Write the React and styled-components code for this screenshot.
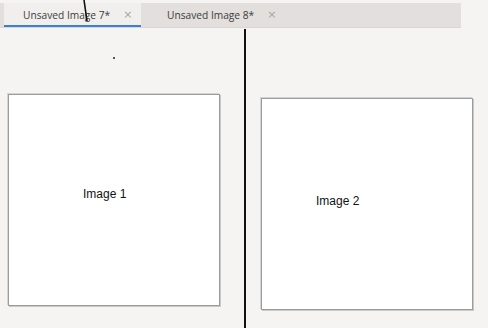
import React from "react";
import styled, { createGlobalStyle } from "styled-components";

const Global = createGlobalStyle`
  html, body { margin: 0; padding: 0; background: #f5f4f2; }
  body { width: 488px; height: 328px; overflow: hidden; }
`;

const tabs = [
  { title: "Unsaved Image 7*", active: true, pad: 19, width: 137 },
  { title: "Unsaved Image 8*", active: false, pad: 26, width: 150 },
];

function App() {
  return (
    <>
      <Global />
      <Page>
        <TabBar>
          {tabs.map((t) => (
            <Tab key={t.title} $active={t.active} $pad={t.pad} $w={t.width}>
              <span>{t.title}</span>
              <Close>×</Close>
            </Tab>
          ))}
        </TabBar>
        <Body>
          <Pane $w={244}>
            <Canvas $mt={65} $ml={8}>
              <Label $top={92} $left={74}>Image 1</Label>
            </Canvas>
          </Pane>
          <Divider />
          <Pane>
            <Canvas $mt={69} $ml={15}>
              <Label $top={95} $left={54}>Image 2</Label>
            </Canvas>
          </Pane>
        </Body>
        <Dot />
        <Stroke width="10" height="24" viewBox="0 0 10 24">
          <path d="M1 0 L4 21" stroke="#111" strokeWidth="1.6" fill="none" />
        </Stroke>
      </Page>
    </>
  );
}

const Page = styled.div`
  position: relative;
  width: 488px;
  height: 328px;
  padding-top: 3px;
  box-sizing: border-box;
  display: flex;
  flex-direction: column;
`;

const TabBar = styled.div`
  width: 457px;
  height: 24px;
  background: #e2dfdc;
  border-bottom: 1px solid #d9d6d3;
  display: flex;
  padding-left: 4px;
  box-sizing: content-box;
`;

const Tab = styled.div`
  width: ${(p) => p.$w}px;
  height: 24px;
  box-sizing: border-box;
  display: flex;
  align-items: center;
  gap: 13px;
  padding: 1px 0 0 ${(p) => p.$pad}px;
  white-space: nowrap;
  background: ${(p) => (p.$active ? "#f0efed" : "transparent")};
  border-bottom: 2px solid ${(p) => (p.$active ? "#3a80db" : "transparent")};
  font-family: "Open Sans", "Noto Sans", sans-serif;
  font-size: 10.2px;
  color: #3c3c3c;
`;

const Close = styled.span`
  font-family: "DejaVu Sans", sans-serif;
  font-size: 11px;
  color: #a6a6a6;
`;

const Body = styled.div`
  flex: 1;
  display: flex;
  margin-top: 1px;
`;

const Pane = styled.div`
  ${(p) => (p.$w ? `width: ${p.$w}px;` : "flex: 1;")}
  display: flex;
  align-items: flex-start;
`;

const Divider = styled.div`
  width: 2px;
  background: #111;
`;

const Canvas = styled.div`
  margin-top: ${(p) => p.$mt}px;
  margin-left: ${(p) => p.$ml}px;
  width: 212px;
  height: 212px;
  background: #fff;
  border: 1px solid #9c9c9c;
  box-shadow: 1px 1px 0 #c8c8c8, -1px -1px 0 #d4d4d4;
  box-sizing: border-box;
`;

const Label = styled.div`
  padding-top: ${(p) => p.$top}px;
  padding-left: ${(p) => p.$left}px;
  font-family: "Liberation Sans", Arial, sans-serif;
  font-size: 12px;
  color: #111;
`;

const Dot = styled.div`
  position: absolute;
  left: 113px;
  top: 57px;
  width: 2px;
  height: 2px;
  background: #555;
`;

const Stroke = styled.svg`
  position: absolute;
  left: 83px;
  top: 0;
`;

export default App;
